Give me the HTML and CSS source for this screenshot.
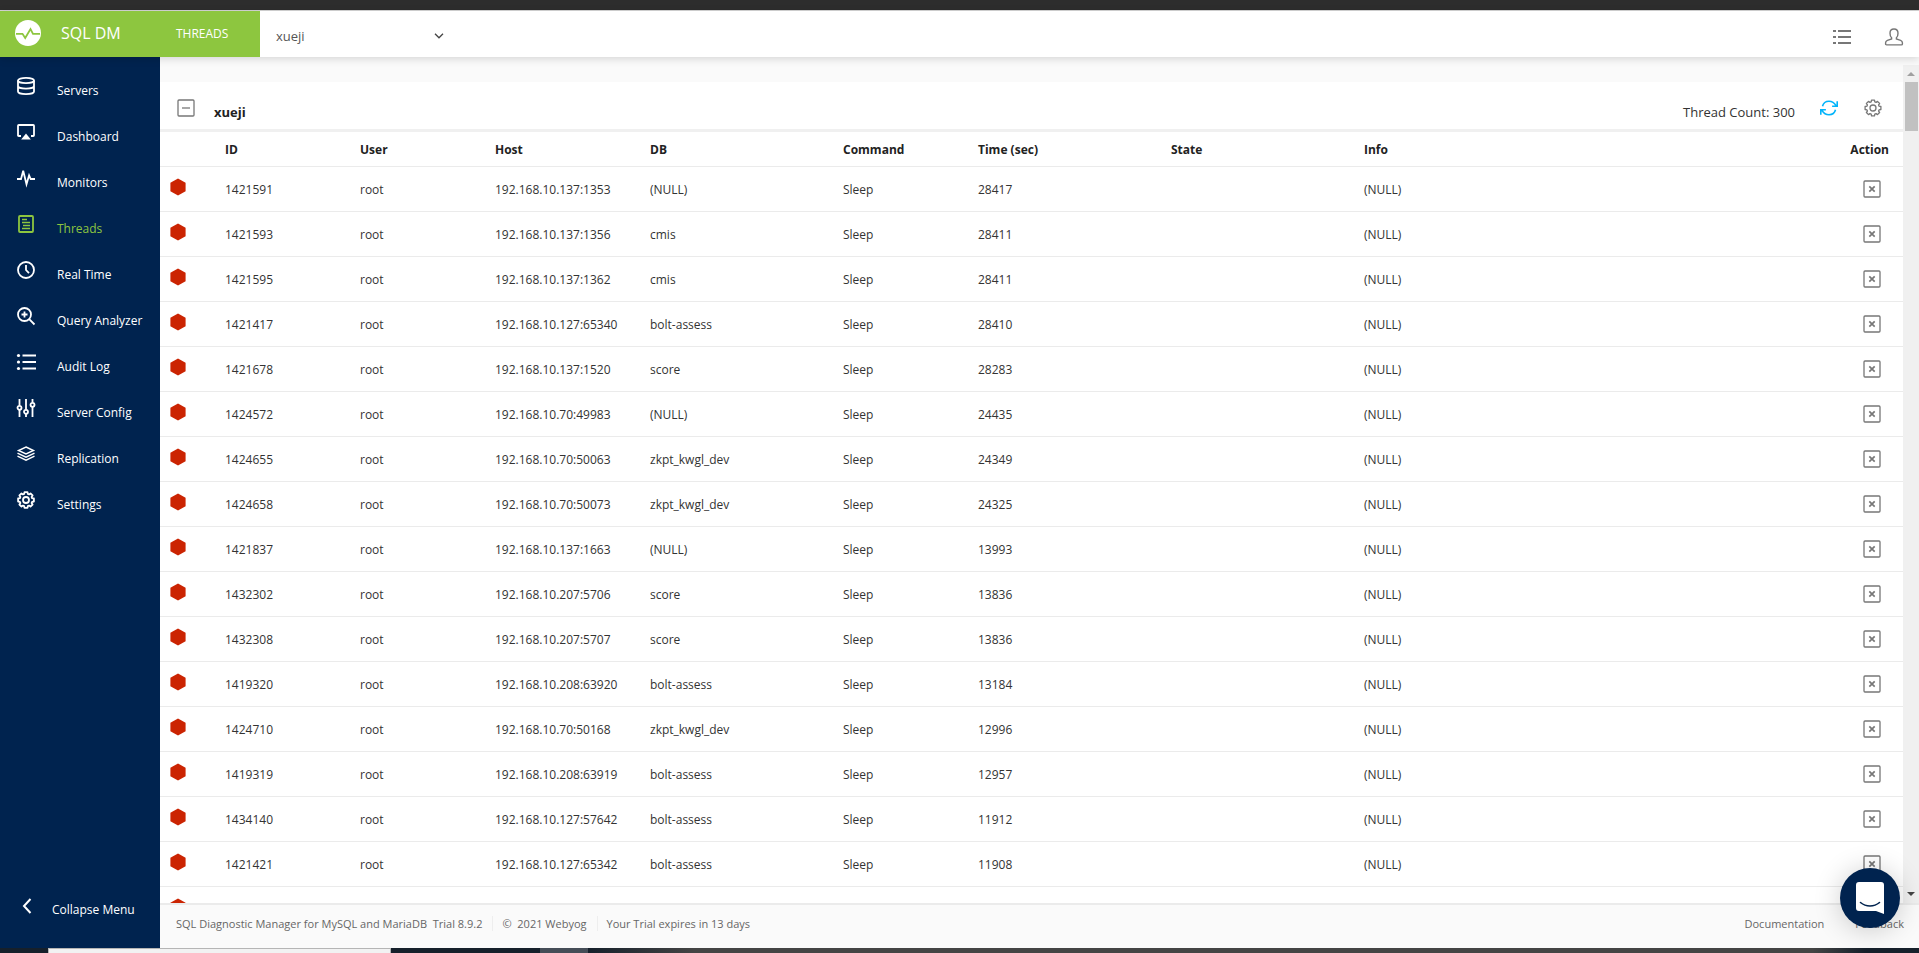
FILE: index.html
```html
<!DOCTYPE html>
<html lang="en">
<head>
  <meta charset="utf-8">
  <meta name="viewport" content="width=device-width, initial-scale=1.0">
  <title>SQL DM - Threads</title>
  <link rel="stylesheet" href="styles.css">
</head>
<body>

  <!-- Shared shapes for the repeated icons -->
  <svg class="sprite" aria-hidden="true">
    <symbol id="hexagon" viewBox="0 0 16 18">
      <path d="M8 0.5L15.6 4.8V13.2L8 17.5L0.4 13.2V4.8Z" fill="#cb2402"/>
    </symbol>
    <symbol id="kill" viewBox="0 0 18 18">
      <rect x="1" y="1" width="16" height="16" rx="1" fill="none" stroke="#777" stroke-width="1.3"/>
      <path d="M6.3 6.3l5.4 5.4M11.7 6.3l-5.4 5.4" stroke="#777" stroke-width="1.7"/>
    </symbol>
    <symbol id="gear" viewBox="0 0 18 18">
      <path d="M7.5 1.1h3l.3 1.8 1.3.5 1.4-1 2.1 2.1-1 1.4.5 1.3 1.8.3v3l-1.8.3-.5 1.3 1 1.4-2.1 2.1-1.4-1-1.3.5-.3 1.8h-3l-.3-1.8-1.3-.5-1.4 1-2.1-2.1 1-1.4-.5-1.3-1.8-.3v-3l1.8-.3.5-1.3-1-1.4 2.1-2.1 1.4 1 1.3-.5z" fill="none" stroke="currentColor" stroke-linejoin="round"/>
      <circle cx="9" cy="9" r="3" fill="none" stroke="currentColor"/>
    </symbol>
  </svg>

  <div class="window-top"></div>

  <header class="topbar">
    <div class="brand">
      <svg class="logo" viewBox="0 0 26 26">
        <circle cx="13" cy="13" r="13" fill="#fff"/>
        <path d="M1 13.8h6.5l2.7 4.2 5.3-9 2.5 4.8H25" fill="none" stroke="#8dc63f" stroke-width="1.8"/>
      </svg>
      <span class="brand-name">SQL DM</span>
      <span class="page-name">THREADS</span>
    </div>
    <div class="server-picker">
      <select class="server-select" aria-label="Server">
        <option>xueji</option>
      </select>
      <svg class="chevron" viewBox="0 0 10 6"><path d="M1 0.8l4 4 4-4" fill="none" stroke="#444" stroke-width="1.3"/></svg>
    </div>
    <div class="top-actions">
      <button class="icon-button" aria-label="List">
        <svg viewBox="0 0 18 18"><path d="M5 3h13M5 9h13M5 15h13M0 3h3M0 9h3M0 15h3" stroke="#777" stroke-width="2"/></svg>
      </button>
      <button class="icon-button" aria-label="Account">
        <svg viewBox="0 0 18 18"><path d="M6.6 9.8C5.4 8.8 5 7 5 5.2 5 2.6 6.6 1 9 1s4 1.6 4 4.2c0 1.800-.4 3.600-1.600 4.600v1.200l4.200 1.300c1.200.4 1.800 1.300 1.800 2.500v1.100c0 .6-.4 1-1 1H1.600c-.6 0-1-.4-1-1v-1.100c0-1.200.6-2.100 1.800-2.500l4.200-1.300z" fill="none" stroke="#777" stroke-width="1.4"/></svg>
      </button>
    </div>
  </header>

  <div class="layout">
    <nav class="sidebar">
      <a href="#" class="nav-item">
        <svg viewBox="0 0 18 18"><ellipse cx="9" cy="3.5" rx="8" ry="2.700"/><path d="M1 3.5v11c0 1.500 3.500 2.700 8 2.700s8-1.200 8-2.700v-11M1 9c0 1.500 3.500 2.700 8 2.700s8-1.200 8-2.700"/></svg>
        <span>Servers</span>
      </a>
      <a href="#" class="nav-item">
        <svg viewBox="0 0 18 18"><path d="M4 13H1.800c-.5 0-.8-.3-.8-.8V2.800c0-.5.300-.8.800-.8h14.400c.5 0 .8.300.8.800v9.400c0 .5-.3.800-.8.800H14"/><path class="solid" d="M9 10.500l4.800 6H4.200z"/></svg>
        <span>Dashboard</span>
      </a>
      <a href="#" class="nav-item">
        <svg viewBox="0 0 18 18"><path d="M0 10h4L6.200 1.800l3.300 13.500 2.600-9 1.600 3.700H18"/></svg>
        <span>Monitors</span>
      </a>
      <a href="#" class="nav-item active">
        <svg viewBox="0 0 18 18"><rect x="2" y="1" width="14" height="16" rx="1"/><path class="lines" d="M5 4.500h5M5 7.500h8M6 10.500h7M5 13.500h8"/></svg>
        <span>Threads</span>
      </a>
      <a href="#" class="nav-item">
        <svg viewBox="0 0 18 18"><circle cx="9" cy="9" r="8"/><path d="M9 4v5l3 3.200"/></svg>
        <span>Real Time</span>
      </a>
      <a href="#" class="nav-item">
        <svg viewBox="0 0 18 18"><circle cx="7.500" cy="7.500" r="6.500"/><path d="M12.200 12.200l5.300 5.300M4.500 7.500h6M7.500 4.500v6"/></svg>
        <span>Query Analyzer</span>
      </a>
      <a href="#" class="nav-item">
        <svg viewBox="0 0 18 18"><path d="M5.500 2.500H19M5.500 9H19M5.500 15.500H19"/><g class="solid"><circle cx="1.500" cy="2.500" r="1.600"/><circle cx="1.500" cy="9" r="1.600"/><circle cx="1.500" cy="15.500" r="1.600"/></g></svg>
        <span>Audit Log</span>
      </a>
      <a href="#" class="nav-item">
        <svg viewBox="0 0 18 18"><path d="M2.500 0v6.500M2.500 11v7M9 0v10.500M9 15v3M15.500 0v3.500M15.500 8v10"/><circle cx="2.500" cy="8.800" r="2"/><circle cx="9" cy="12.800" r="2"/><circle cx="15.500" cy="5.800" r="2"/></svg>
        <span>Server Config</span>
      </a>
      <a href="#" class="nav-item">
        <svg viewBox="0 0 18 18"><path class="lines" d="M9 2l7.500 3.500L9 9 1.500 5.500zM.5 8.200L9 12.200l8.500-4M.5 11.200L9 15.200l8.500-4"/></svg>
        <span>Replication</span>
      </a>
      <a href="#" class="nav-item">
        <svg viewBox="0 0 18 18"><use href="#gear"/></svg>
        <span>Settings</span>
      </a>
      <button class="collapse">
        <svg viewBox="0 0 10 16"><path d="M8.500 1L2 8l6.500 7" fill="none" stroke="#fff" stroke-width="2"/></svg>
        <span>Collapse Menu</span>
      </button>
    </nav>

    <div class="main">
      <div class="scroll-area">
        <main class="content">
          <section class="panel">
            <div class="panel-head">
              <button class="icon-button" aria-label="Collapse xueji">
                <svg viewBox="0 0 18 18"><rect x="1" y="1" width="16" height="16" rx="1" fill="none" stroke="#777" stroke-width="1.3"/><path d="M5 9h8" stroke="#777" stroke-width="1.3"/></svg>
              </button>
              <h2>xueji</h2>
              <span class="thread-count">Thread Count: 300</span>
              <button class="icon-button refresh" aria-label="Refresh">
                <svg viewBox="0 0 18 18"><path d="M2.500 7.200C3.300 4 6 2.200 9 2.200c3 0 5.300 1.500 7 4.500M15.500 10.800C14.700 14 12 15.800 9 15.800c-3 0-5.300-1.500-7-4.500M17.200 2.200v5.100h-5.100M.8 15.800v-5.100h5.100" fill="none" stroke="#03b4fa" stroke-width="1.600"/></svg>
              </button>
              <button class="icon-button" aria-label="Thread settings">
                <svg viewBox="0 0 18 18"><use href="#gear"/></svg>
              </button>
            </div>
            <table class="threads">
              <colgroup>
                <col class="col-status"><col class="col-id"><col class="col-user"><col class="col-host"><col class="col-db"><col class="col-command"><col class="col-time"><col class="col-state"><col class="col-info"><col class="col-action">
              </colgroup>
              <thead>
                <tr><th></th><th>ID</th><th>User</th><th>Host</th><th>DB</th><th>Command</th><th>Time (sec)</th><th>State</th><th>Info</th><th>Action</th></tr>
              </thead>
              <tbody id="threadRows"></tbody>
            </table>
          </section>
        </main>
        <div class="scrollbar">
          <span class="arrow-up"></span>
          <span class="thumb"></span>
          <span class="arrow-down"></span>
        </div>
      </div>

      <footer class="footer">
        <span>SQL Diagnostic Manager for MySQL and MariaDB&nbsp; Trial 8.9.2</span>
        <span class="divided">©&nbsp; 2021 Webyog</span>
        <span class="divided">Your Trial expires in 13 days</span>
        <a href="#" class="doc-link">Documentation</a>
        <a href="#">Feedback</a>
      </footer>
    </div>
  </div>

  <div class="taskbar">
    <span class="task-start"></span>
    <span class="task-search"></span>
    <span class="task-gap"></span>
    <span class="task-app"></span>
    <span class="task-rest"></span>
  </div>

  <button class="chat" aria-label="Open chat">
    <svg viewBox="0 0 28 32"><path d="M3 0h22a3 3 0 0 1 3 3v29l-8-3H3a3 3 0 0 1-3-3V3a3 3 0 0 1 3-3z" fill="#fff"/><path d="M4.500 20.500c5.500 4.600 13.500 4.600 19 0" fill="none" stroke="#00234f" stroke-width="1.600" stroke-linecap="round"/></svg>
  </button>

  <script>
    // id, host, db, time
    const threads = [
      [1421591, "192.168.10.137:1353", "(NULL)", 28417],
      [1421593, "192.168.10.137:1356", "cmis", 28411],
      [1421595, "192.168.10.137:1362", "cmis", 28411],
      [1421417, "192.168.10.127:65340", "bolt-assess", 28410],
      [1421678, "192.168.10.137:1520", "score", 28283],
      [1424572, "192.168.10.70:49983", "(NULL)", 24435],
      [1424655, "192.168.10.70:50063", "zkpt_kwgl_dev", 24349],
      [1424658, "192.168.10.70:50073", "zkpt_kwgl_dev", 24325],
      [1421837, "192.168.10.137:1663", "(NULL)", 13993],
      [1432302, "192.168.10.207:5706", "score", 13836],
      [1432308, "192.168.10.207:5707", "score", 13836],
      [1419320, "192.168.10.208:63920", "bolt-assess", 13184],
      [1424710, "192.168.10.70:50168", "zkpt_kwgl_dev", 12996],
      [1419319, "192.168.10.208:63919", "bolt-assess", 12957],
      [1434140, "192.168.10.127:57642", "bolt-assess", 11912],
      [1421421, "192.168.10.127:65342", "bolt-assess", 11908]
    ];

    const hexagon = '<svg class="hexagon"><use href="#hexagon"/></svg>';
    const kill = '<button class="icon-button" aria-label="Kill thread"><svg><use href="#kill"/></svg></button>';

    let rows = "";
    threads.forEach(([id, host, db, time]) => {
      rows += `<tr><td>${hexagon}</td><td>${id}</td><td>root</td><td>${host}</td><td>${db}</td><td>Sleep</td><td>${time}</td><td></td><td>(NULL)</td><td>${kill}</td></tr>`;
    });
    rows += `<tr><td>${hexagon}</td><td colspan="9"></td></tr>`;
    document.getElementById("threadRows").innerHTML = rows;
  </script>

</body>
</html>
```
FILE: styles.css
```css
* {
  box-sizing: border-box;
}

body {
  display: flex;
  flex-direction: column;
  height: 100vh;
  margin: 0;
  overflow: hidden;
  font-family: 'Open Sans', 'Noto Sans', sans-serif;
  font-size: 12px;
  color: #333;
  background-color: #fafafa;
}

a {
  color: inherit;
  text-decoration: none;
}

button {
  padding: 0;
  border: none;
  background: none;
  font: inherit;
  cursor: pointer;
}

svg {
  display: block;
  overflow: visible;
}

.sprite {
  position: absolute;
  width: 0;
  height: 0;
}

.icon-button {
  display: block;
  color: #777;
}

.icon-button svg {
  width: 18px;
  height: 18px;
  stroke-width: 1.3;
}

.window-top {
  flex: none;
  height: 11px;
  background-color: #2d2d2d;
  border-bottom: 1px solid #d5d5d5;
}

/* Top bar */
.topbar {
  display: flex;
  flex: none;
  height: 46px;
  background-color: #fff;
  box-shadow: 0 2px 8px rgba(0, 0, 0, 0.15);
  z-index: 1;
}

.brand {
  display: flex;
  align-items: center;
  width: 260px;
  padding: 0 0 2px 15px;
  background-color: #8dc63f;
  color: #fff;
}

.logo {
  width: 26px;
  height: 26px;
}

.brand-name {
  width: 115px;
  margin-left: 20px;
  font-size: 16px;
}

.page-name {
  font-size: 12px;
}

.server-picker {
  display: flex;
  align-items: center;
  width: 184px;
  margin-left: 16px;
  padding-top: 4px;
}

.server-select {
  flex: 1;
  padding: 0;
  border: none;
  appearance: none;
  background: none;
  font: inherit;
  font-size: 13px;
  color: #555;
}

.chevron {
  width: 10px;
  height: 6px;
  margin-right: 16px;
}

.top-actions {
  display: flex;
  align-items: center;
  gap: 34px;
  margin-left: auto;
  padding: 6px 16px 0 0;
}

/* Sidebar */
.layout {
  display: flex;
  flex: 1;
  min-height: 0;
}

.sidebar {
  display: flex;
  flex-direction: column;
  flex: none;
  width: 160px;
  padding-top: 10px;
  background-color: #00234f;
  color: #fff;
  font-weight: 500;
}

.nav-item {
  display: flex;
  align-items: center;
  gap: 22px;
  height: 46px;
  padding-left: 17px;
  white-space: nowrap;
}

.nav-item svg {
  flex: none;
  width: 18px;
  height: 18px;
  margin-bottom: 9px;
  fill: none;
  stroke: currentColor;
  stroke-width: 1.8;
}

.nav-item .solid {
  fill: currentColor;
  stroke: none;
}

.nav-item .lines {
  stroke-width: 1.4;
}

.active {
  color: #8dc63f;
}

.collapse {
  display: flex;
  align-items: center;
  gap: 20px;
  height: 46px;
  margin-top: auto;
  margin-bottom: 16px;
  padding-left: 22px;
  color: #fff;
}

.collapse svg {
  width: 10px;
  height: 16px;
  margin-bottom: 6px;
}

/* Content */
.main {
  display: flex;
  flex-direction: column;
  flex: 1;
  min-width: 0;
}

.scroll-area {
  display: flex;
  flex: 1;
  min-height: 0;
}

.content {
  flex: 1;
  min-width: 0;
  padding-top: 25px;
  overflow: hidden;
}

.panel {
  background-color: #fff;
}

.panel-head {
  display: flex;
  align-items: center;
  height: 50px;
  padding: 8px 21px 0 17px;
  border-bottom: 3px solid #f0f0f0;
}

.panel-head .icon-button {
  margin-bottom: 4px;
}

.panel-head h2 {
  margin: 4px 0 0 19px;
  font-size: 13px;
  color: #222;
}

.thread-count {
  margin: 4px 25px 0 auto;
  font-size: 13px;
}

.refresh {
  margin-right: 26px;
}

.threads {
  width: 100%;
  table-layout: fixed;
  border-spacing: 0;
}

.col-status {
  width: 65px;
}

.col-id,
.col-user,
.col-command {
  width: 135px;
}

.col-host {
  width: 155px;
}

.col-db,
.col-time,
.col-state {
  width: 193px;
}

.col-action {
  width: 72px;
}

.threads th,
.threads td {
  height: 45px;
  padding: 0;
  border-bottom: 1px solid #ebebeb;
  text-align: left;
}

.threads th {
  height: 35px;
  color: #222;
}

.threads th:last-child {
  padding-right: 14px;
  text-align: right;
}

.threads td:last-child {
  padding-left: 32px;
}

.hexagon {
  width: 16px;
  height: 18px;
  margin: 0 0 4px 10px;
}

.scrollbar {
  display: flex;
  flex-direction: column;
  align-items: center;
  width: 16px;
  margin-top: 8px;
  padding: 7px 0;
  background-color: #f0f0f0;
}

.arrow-up {
  border: 4px solid transparent;
  border-top: none;
  border-bottom-color: #a0a0a0;
}

.thumb {
  width: 13px;
  height: 49px;
  margin-top: 6px;
  background-color: #c1c1c1;
}

.arrow-down {
  margin-top: auto;
  border: 4px solid transparent;
  border-bottom: none;
  border-top-color: #444;
}

/* Footer */
.footer {
  display: flex;
  align-items: center;
  flex: none;
  height: 45px;
  padding: 0 15px 6px 16px;
  border-top: 2px solid #ebebeb;
  background-color: #fafafa;
  font-size: 11px;
  color: #666;
}

.divided {
  margin-left: 10px;
  padding-left: 9px;
  border-left: 1px solid #eee;
}

.doc-link {
  margin-left: auto;
  margin-right: 31px;
}

.chat {
  position: absolute;
  right: 19px;
  bottom: 25px;
  display: flex;
  align-items: center;
  justify-content: center;
  width: 60px;
  height: 60px;
  border-radius: 50%;
  background-color: #00234f;
  box-shadow: 0 2px 28px rgba(0, 0, 0, 0.2);
  z-index: 2;
}

.chat svg {
  width: 28px;
  height: 32px;
}

/* Desktop strip under the page */
.taskbar {
  display: flex;
  flex: none;
  height: 5px;
  background-color: #16202b;
}

.task-start {
  width: 48px;
}

.task-search {
  width: 343px;
  border: 1px solid #b5b5b5;
  border-bottom: none;
  background-color: #f2f2f2;
}

.task-gap {
  width: 149px;
}

.task-app {
  width: 48px;
  background-color: #454d57;
}

.task-rest {
  flex: 1;
  background: linear-gradient(to right, #16202b, #444 8%, #444 92%, #16202b 96%);
}
```
